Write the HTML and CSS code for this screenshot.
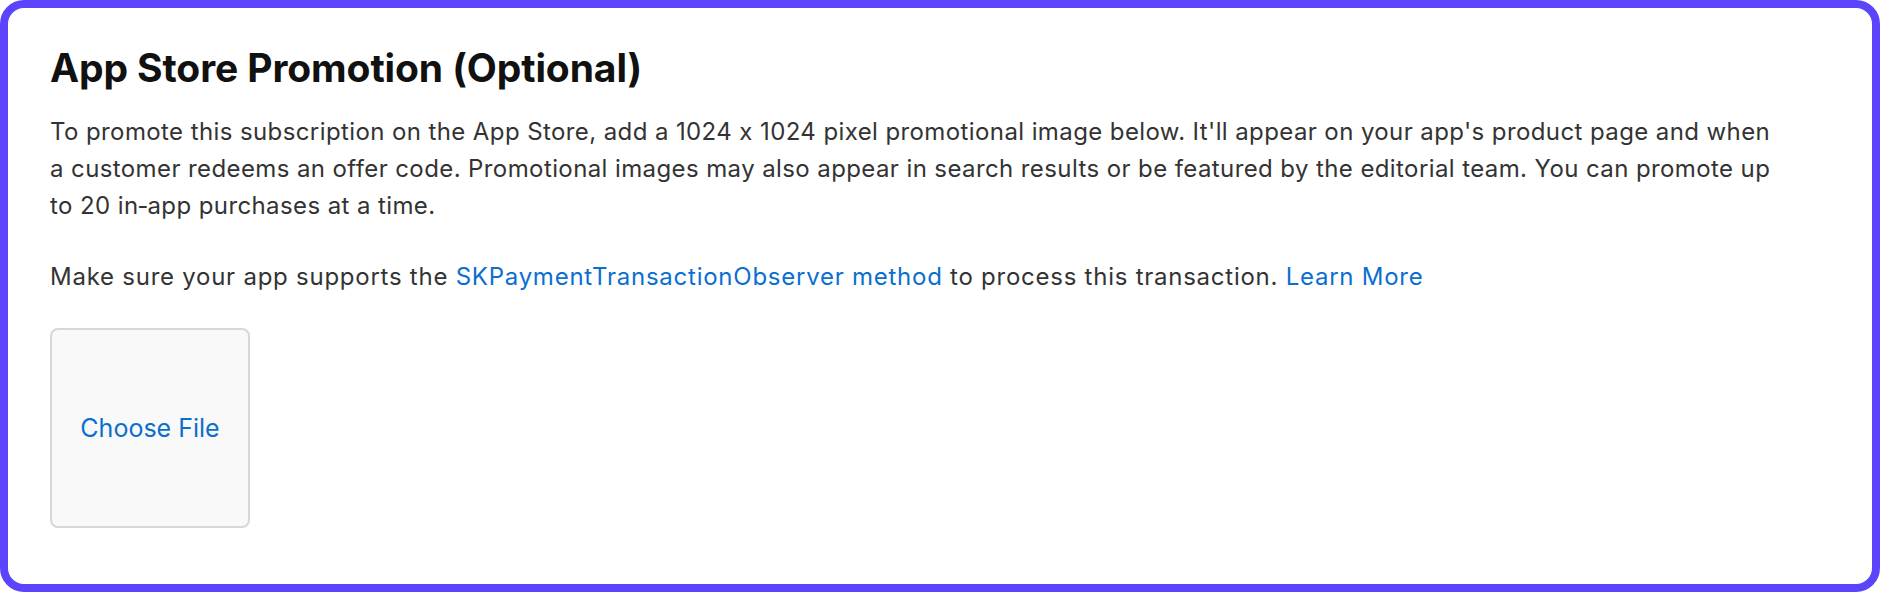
FILE: index.html
```html
<!DOCTYPE html>
<html lang="en">
<head>
<meta charset="utf-8">
<title>App Store Promotion</title>
<link rel="stylesheet" href="styles.css">
</head>
<body>
<section class="card">
  <h1 class="title">App Store Promotion (Optional)</h1>
  <p class="text">To promote this subscription on the App Store, add a 1024 x 1024 pixel promotional image below. It'll appear on your app's product page and when a&nbsp;customer redeems an offer code. Promotional images may also appear in search results or be featured by the editorial team. You can promote up to&nbsp;20&nbsp;in&#8209;app purchases at a time.</p>
  <p class="text note">Make sure your app supports the <a class="link" href="#">SKPaymentTransactionObserver method</a> to process this transaction. <a class="link" href="#">Learn More</a></p>
  <div class="upload">
    <button class="upload-btn" type="button">Choose File</button>
  </div>
</section>
</body>
</html>
```

FILE: styles.css
```css
html, body {
  margin: 0;
  padding: 0;
  background: #ffffff;
}

body {
  font-family: Inter, "Noto Sans", "Liberation Sans", sans-serif;
  font-feature-settings: "calt" 0;
}

.card {
  box-sizing: border-box;
  width: 1880px;
  height: 592px;
  border: 8px solid #5b45fb;
  border-radius: 24px;
  padding: 37px 42px 0 42px;
  background: #ffffff;
}

.title {
  margin: 0;
  font-size: 39px;
  line-height: 46px;
  font-weight: 700;
  color: #111111;
  letter-spacing: -0.1px;
}

.text {
  margin: 22px 0 0 0;
  font-size: 24px;
  line-height: 37px;
  color: #333333;
  font-weight: 400;
  letter-spacing: 0.4px;
}

.note {
  margin-top: 34px;
  letter-spacing: 0.75px;
}

.link {
  color: #0a6fcf;
  text-decoration: none;
}

.upload {
  margin-top: 33px;
  width: 200px;
  height: 200px;
  box-sizing: border-box;
  border: 2px solid #d7d7d7;
  border-radius: 8px;
  background: #f9f9f9;
  display: flex;
  align-items: center;
  justify-content: center;
}

.upload-btn {
  border: 0;
  background: none;
  padding: 0;
  font-family: inherit;
  font-feature-settings: "calt" 0;
  font-size: 25px;
  color: #0a6fcf;
  cursor: pointer;
}
```
